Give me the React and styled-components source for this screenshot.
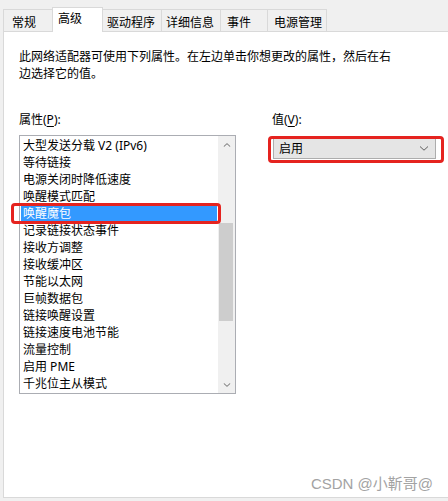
import styled, { createGlobalStyle } from 'styled-components';

const GlobalStyle = createGlobalStyle`
  html, body {
    margin: 0;
    padding: 0;
    background: #f0f0f0;
  }
  body {
    font-family: "Noto Sans", "Noto Sans CJK SC", sans-serif;
    font-size: 12px;
    color: #000;
  }
`;

const Window = styled.div`
  width: 448px;
  height: 501px;
  background: #f0f0f0;
  display: flex;
  flex-direction: column;
  overflow: hidden;
`;

const TabBar = styled.div`
  display: flex;
  align-items: flex-end;
  height: 32px;
  padding-left: 3px;
  margin-bottom: -1px;
`;

const Tab = styled.div`
  position: relative;
  box-sizing: border-box;
  width: ${(p) => p.$w}px;
  height: ${(p) => (p.$active ? 25 : 23)}px;
  padding-left: ${(p) => p.$pl}px;
  padding-top: ${(p) => (p.$active ? 2 : 4)}px;
  line-height: 17px;
  border: 1px solid #d9d9d9;
  border-bottom: ${(p) => (p.$active ? 'none' : '1px solid #d9d9d9')};
  margin-left: -1px;
  background: ${(p) => (p.$active ? '#fff' : '#f0f0f0')};
  z-index: ${(p) => (p.$active ? 1 : 0)};
  white-space: nowrap;
  &:first-child {
    margin-left: 0;
  }
`;

const Panel = styled.div`
  box-sizing: border-box;
  margin-left: 3px;
  height: 467px;
  background: #fff;
  border: 1px solid #d9d9d9;
  border-right: none;
  padding: 16px 0 4px 15px;
  display: flex;
  flex-direction: column;
`;

const Intro = styled.p`
  margin: 0;
  width: 380px;
  line-height: 17px;
`;

const Columns = styled.div`
  display: grid;
  grid-template-columns: 217px 171px;
  column-gap: 36px;
  margin-top: 29px;
`;

const Column = styled.div`
  display: flex;
  flex-direction: column;
`;

const Label = styled.div`
  line-height: 17px;
  margin-bottom: 7px;
  u {
    text-decoration: underline;
    text-underline-offset: 2px;
  }
`;

const ListBox = styled.div`
  box-sizing: border-box;
  height: 259px;
  border: 1px solid #abadb3;
  display: flex;
  background: #fff;
`;

const Items = styled.div`
  flex: 1;
  padding: 1px;
  display: flex;
  flex-direction: column;
`;

const Item = styled.div`
  position: relative;
  height: 17px;
  line-height: 17px;
  padding-left: 2px;
  white-space: nowrap;
  background: ${(p) => (p.$selected ? '#3399ff' : 'transparent')};
  color: ${(p) => (p.$selected ? '#fff' : '#000')};
`;

const Marker = styled.span`
  position: absolute;
  pointer-events: none;
  border: 3px solid #e5231f;
  border-radius: 4px;
  top: ${(p) => p.$t}px;
  bottom: ${(p) => p.$b}px;
  left: ${(p) => p.$l}px;
  right: ${(p) => p.$r}px;
`;

const ScrollBar = styled.div`
  width: 17px;
  background: #f0f0f0;
  display: flex;
  flex-direction: column;
`;

const ScrollArrow = styled.div`
  height: 17px;
  display: flex;
  align-items: center;
  justify-content: center;
  color: #606060;
`;

const Track = styled.div`
  flex: 1;
  padding-top: 70px;
`;

const Thumb = styled.div`
  width: 14px;
  height: 98px;
  margin-left: 1px;
  background: #cdcdcd;
`;

const Combo = styled.div`
  position: relative;
  box-sizing: border-box;
  width: 163px;
  height: 21px;
  margin-left: 1px;
  margin-top: 3px;
  border: 1px solid #adadad;
  background: #e5e5e5;
  display: flex;
  align-items: center;
  justify-content: space-between;
  padding: 0 6px 0 5px;
  line-height: 17px;
  color: #000;
  svg {
    color: #505050;
  }
`;

const Watermark = styled.div`
  margin-top: auto;
  align-self: flex-end;
  margin-right: 15px;
  font-family: "Liberation Sans", "Noto Sans CJK SC", sans-serif;
  font-size: 15px;
  line-height: 18px;
  color: #a3a3a3;
`;

const Chevron = ({ up, w = 9, h = 5, sw = 1.2 }) => (
  <svg width={w} height={h} viewBox="0 0 9 5">
    <polyline
      points={up ? '0.5,4.5 4.5,0.8 8.5,4.5' : '0.5,0.5 4.5,4.2 8.5,0.5'}
      fill="none"
      stroke="currentColor"
      strokeWidth={sw}
    />
  </svg>
);

const tabs = [
  { name: '常规', w: 50, pl: 8 },
  { name: '高级', w: 51, pl: 5, active: true },
  { name: '驱动程序', w: 60, pl: 4 },
  { name: '详细信息', w: 60, pl: 4 },
  { name: '事件', w: 48, pl: 6 },
  { name: '电源管理', w: 60, pl: 6 },
];

const properties = [
  '大型发送分载 V2 (IPv6)',
  '等待链接',
  '电源关闭时降低速度',
  '唤醒模式匹配',
  '唤醒魔包',
  '记录链接状态事件',
  '接收方调整',
  '接收缓冲区',
  '节能以太网',
  '巨帧数据包',
  '链接唤醒设置',
  '链接速度电池节能',
  '流量控制',
  '启用 PME',
  '千兆位主从模式',
];

export default function App() {
  return (
    <>
      <GlobalStyle />
      <Window>
        <TabBar>
          {tabs.map((t) => (
            <Tab key={t.name} $w={t.w} $pl={t.pl} $active={t.active}>
              {t.name}
            </Tab>
          ))}
        </TabBar>
        <Panel>
          <Intro>此网络适配器可使用下列属性。在左边单击你想更改的属性，然后在右边选择它的值。</Intro>
          <Columns>
            <Column>
              <Label>
                属性(<u>P</u>):
              </Label>
              <ListBox>
                <Items>
                  {properties.map((p) => (
                    <Item key={p} $selected={p === '唤醒魔包'}>
                      {p}
                      {p === '唤醒魔包' && <Marker $t={-2} $b={-2} $l={-10} $r={-4} />}
                    </Item>
                  ))}
                </Items>
                <ScrollBar>
                  <ScrollArrow>
                    <Chevron up w={8} h={4} />
                  </ScrollArrow>
                  <Track>
                    <Thumb />
                  </Track>
                  <ScrollArrow>
                    <Chevron w={8} h={4} />
                  </ScrollArrow>
                </ScrollBar>
              </ListBox>
            </Column>
            <Column>
              <Label>
                值(<u>V</u>):
              </Label>
              <Combo>
                <span>启用</span>
                <Chevron w={10} h={5} sw={0.9} />
                <Marker $t={-3} $b={-5} $l={-6} $r={-9} />
              </Combo>
            </Column>
          </Columns>
          <Watermark>CSDN @小靳哥@</Watermark>
        </Panel>
      </Window>
    </>
  );
}
